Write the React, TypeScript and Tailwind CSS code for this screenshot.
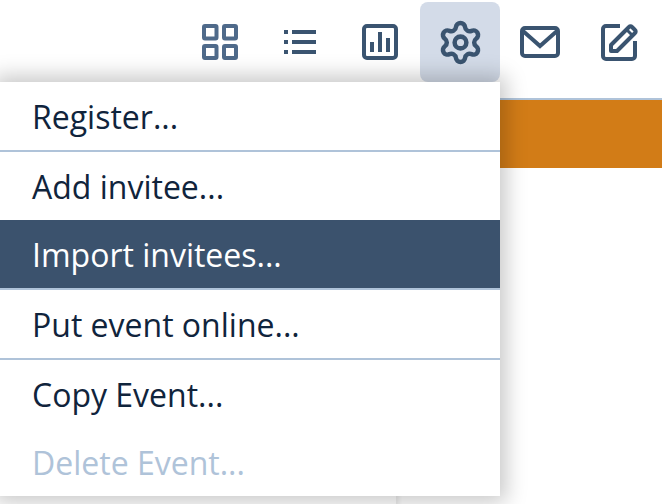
import React from 'react';
import { Settings } from 'lucide-react';

function GridIcon() {
  return (
    <svg width="36" height="36" viewBox="0 0 36 36" fill="none" stroke="#4f6a8a" strokeWidth="4">
      <rect x="2" y="2" width="12.5" height="12.5" rx="1" />
      <rect x="22" y="2" width="12" height="12.5" rx="1" />
      <rect x="2" y="22" width="12.5" height="12" rx="1" />
      <rect x="22" y="22" width="12" height="12" rx="1" />
    </svg>
  );
}

function ListIcon() {
  return (
    <svg width="32" height="24" viewBox="0 0 32 24" fill="#3a5470">
      <rect x="0" y="0" width="4" height="4" />
      <rect x="8" y="0" width="24" height="4" />
      <rect x="0" y="10" width="4" height="4" />
      <rect x="8" y="10" width="24" height="4" />
      <rect x="0" y="20" width="4" height="4" />
      <rect x="8" y="20" width="24" height="4" />
    </svg>
  );
}

function ChartIcon() {
  return (
    <svg width="36" height="36" viewBox="0 0 36 36" fill="none">
      <rect x="2" y="2" width="32" height="32" rx="3" stroke="#3a5470" strokeWidth="4" />
      <rect x="8" y="18" width="4" height="10" fill="#3a5470" />
      <rect x="16" y="8" width="4" height="20" fill="#3a5470" />
      <rect x="24" y="14" width="4" height="14" fill="#3a5470" />
    </svg>
  );
}

function MailIcon() {
  return (
    <svg width="40" height="32" viewBox="0 0 40 32" fill="none" stroke="#3a5470" strokeWidth="4">
      <rect x="2" y="2" width="36" height="28" rx="3" />
      <path d="M3 5l17 15L37 5" />
    </svg>
  );
}

function EditIcon() {
  return (
    <svg width="38" height="38" viewBox="0 0 38 38" fill="none" stroke="#3a5470" strokeWidth="4">
      <path d="M19 3H5a3 3 0 0 0-3 3v27a3 3 0 0 0 3 3h26a3 3 0 0 0 3-3V18" strokeLinejoin="round" />
      <path d="M10 28v-6L28 4a2 2 0 0 1 3 0l3 3a2 2 0 0 1 0 3L16 28z" fill="#fff" strokeLinejoin="round" />
      <path d="M26 7l5 5" strokeWidth="3" />
    </svg>
  );
}

const toolbar = [
  { key: 'grid', icon: <GridIcon /> },
  { key: 'list', icon: <ListIcon /> },
  { key: 'chart', icon: <ChartIcon /> },
  { key: 'settings', icon: <Settings size={47} strokeWidth={2.3} color="#3a5470" />, active: true },
  { key: 'mail', icon: <MailIcon /> },
  { key: 'edit', icon: <EditIcon /> },
];

const menuGroups = [
  [{ label: 'Register...' }],
  [{ label: 'Add invitee...' }, { label: 'Import invitees...', active: true }],
  [{ label: 'Put event online...' }],
  [{ label: 'Copy Event...' }, { label: 'Delete Event...', disabled: true }],
];

export default function App() {
  return (
    <div
      className="relative w-[662px] h-[504px] overflow-hidden bg-white"
      style={{ fontFamily: '"Open Sans", sans-serif' }}
    >
      <div className="flex justify-end h-[98px] pt-[2px] pr-[2px]">
        {toolbar.map((item) => (
          <button
            key={item.key}
            className={`flex items-center justify-center w-[80px] h-[80px] rounded-lg ${item.active ? 'bg-[#d3dbe8]' : ''}`}
          >
            {item.icon}
          </button>
        ))}
      </div>
      <div className="h-[70px] border-t-2 border-[#afc3d9] bg-[#d27c17]" />
      <div className="w-[396px] h-[400px] bg-white shadow-[3px_0_4px_rgba(0,0,0,0.08)]" />

      <div className="absolute left-0 top-[82px] w-[500px] bg-white shadow-[0_0_20px_6px_rgba(0,0,0,0.22)]">
        {menuGroups.map((group, i) => (
          <div key={i} className="border-b-2 border-[#afc3d9] last:border-b-0">
            {group.map((item) => (
              <div
                key={item.label}
                className={`flex items-center h-[68px] pl-[32px] pt-[2px] text-[32px] ${
                  item.active
                    ? 'bg-[#3b526d] text-white'
                    : item.disabled
                      ? 'text-[#afc3d9]'
                      : 'text-[#10243c]'
                }`}
              >
                {item.label}
              </div>
            ))}
          </div>
        ))}
      </div>
    </div>
  );
}
